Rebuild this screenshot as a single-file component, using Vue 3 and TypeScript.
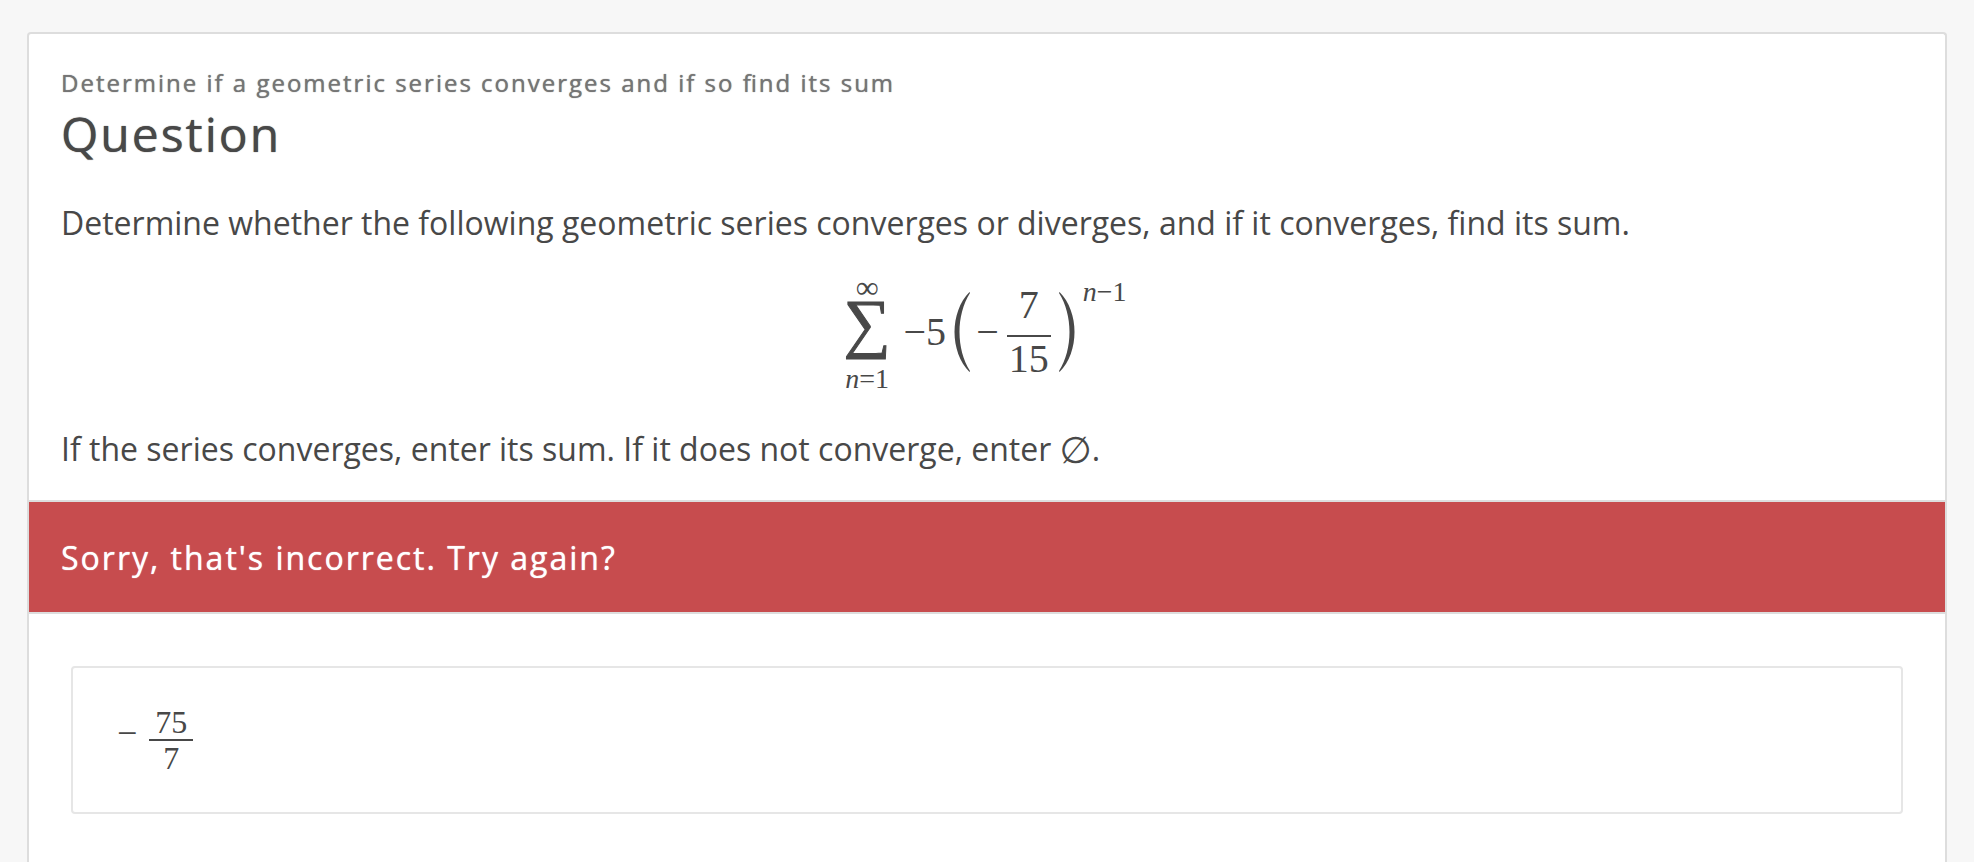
<script setup lang="ts">
import { ref } from 'vue'

interface Fraction {
  top: string
  bottom: string
}

const skill = 'Determine if a geometric series converges and if so find its sum'
const prompt =
  'Determine whether the following geometric series converges or diverges, and if it converges, find its sum.'
const ratio: Fraction = { top: '7', bottom: '15' }
const answer = ref<Fraction>({ top: '75', bottom: '7' })
</script>

<template>
  <main class="page">
    <article class="card">
      <section class="question">
        <p class="skill">{{ skill }}</p>
        <h1 class="title">Question</h1>
        <p class="text">{{ prompt }}</p>
        <div class="formula" role="math" aria-label="Sum from n equals 1 to infinity of -5 (-7/15)^(n-1)">
          <span class="sum">
            <span class="limit upper">∞</span>
            <span class="sigma">∑</span>
            <span class="limit lower"><i>n</i>=1</span>
          </span>
          <span class="term">−5</span>
          <svg class="paren" viewBox="0 0 16 80" aria-hidden="true">
            <path d="M15.5 0C-4.500 20-4.500 60 15.5 80L16 79C2 57 2 23 16 1Z" />
          </svg>
          <span class="term inner">−</span>
          <span class="fraction">
            <span class="numerator">{{ ratio.top }}</span>
            <span class="denominator">{{ ratio.bottom }}</span>
          </span>
          <svg class="paren" viewBox="0 0 16 80" aria-hidden="true">
            <path d="M0.5 0C20.500 20 20.500 60 0.5 80L0 79C14 57 14 23 0 1Z" />
          </svg>
          <span class="exponent"><i>n</i>−1</span>
        </div>
        <p class="text">
          If the series converges, enter its sum. If it does not converge, enter <span class="empty">∅</span>.
        </p>
      </section>
      <section class="feedback" role="alert">Sorry, that's incorrect. Try again?</section>
      <section class="response">
        <div class="answer" role="textbox" tabindex="0" aria-label="Answer">
          <span class="minus">−</span>
          <span class="fraction small">
            <span class="numerator">{{ answer.top }}</span>
            <span class="denominator">{{ answer.bottom }}</span>
          </span>
        </div>
      </section>
    </article>
  </main>
</template>

<style>
html,
body {
  margin: 0;
  background: #f7f7f7;
}
</style>

<style scoped>
.page {
  box-sizing: border-box;
  min-height: 100vh;
  display: flex;
  padding: 32px 27px 0;
  color: #484848;
  font-family: 'Open Sans', 'Noto Sans', sans-serif;
}

.card {
  flex: 1;
  min-width: 0;
  background: #fff;
  border: 2px solid #ddd;
  border-bottom: 0;
  border-radius: 4px 4px 0 0;
}

.question {
  padding: 32px 32px 27px;
}

.skill,
.title,
.text {
  margin: 0;
}

.skill,
.title,
.feedback {
  font-weight: 500;
  letter-spacing: 2px;
  text-shadow: 0 0 1px currentColor;
}

.skill {
  color: #757575;
  font-size: 24px;
  line-height: 34px;
  font-feature-settings: 'liga' 1;
}

.title {
  margin-top: 2px;
  font-size: 48px;
  line-height: 64px;
}

.text {
  font-size: 32px;
  line-height: 48px;
}

.title + .text {
  margin-top: 33px;
}

.formula {
  display: flex;
  justify-content: center;
  align-items: center;
  height: 122px;
  margin: 24px 0 32px;
  padding-right: 4px;
  font-family: 'Liberation Serif', serif;
  font-size: 40px;
  line-height: 48px;
}

.sum {
  display: flex;
  flex-direction: column;
  align-items: center;
  margin-right: 13px;
  padding-top: 2px;
}

.limit,
.exponent {
  font-size: 28px;
  line-height: 28px;
}

.upper {
  margin-bottom: 2px;
  font-size: 32px;
}

.lower {
  margin-top: 22px;
}

.sigma {
  font-size: 66px;
  line-height: 40px;
  -webkit-text-stroke: 1px currentColor;
}

.paren {
  width: 16px;
  height: 80px;
  margin-left: 8px;
  fill: currentColor;
}

.inner {
  margin: 0 8px 0 6px;
}

.fraction {
  display: flex;
  flex-direction: column;
  text-align: center;
}

.numerator {
  padding: 0 2px 8px;
  border-bottom: 2px solid currentColor;
  line-height: 44px;
}

.denominator {
  padding: 0 2px;
  line-height: 44px;
}

.exponent {
  align-self: flex-start;
  margin: 7px 0 0 8px;
}

.empty {
  font-family: 'DejaVu Sans', sans-serif;
  font-size: 37px;
  line-height: 38px;
  vertical-align: -2px;
}

.feedback {
  padding: 32px 32px 30px;
  background: #c74c4e;
  border: 2px solid #ddd;
  border-width: 2px 0;
  color: #fff;
  font-size: 32px;
  line-height: 48px;
}

.response {
  padding: 52px 42px;
}

.answer {
  display: flex;
  align-items: center;
  padding: 37px 44px;
  border: 2px solid #e6e6e6;
  border-radius: 4px;
  font-family: 'Liberation Serif', serif;
  font-size: 32px;
}

.minus {
  margin-right: 12px;
  padding-bottom: 14px;
  font-size: 36px;
}

.small .numerator {
  padding: 0 6px;
  line-height: 34px;
}

.small .denominator {
  line-height: 34px;
}
</style>
